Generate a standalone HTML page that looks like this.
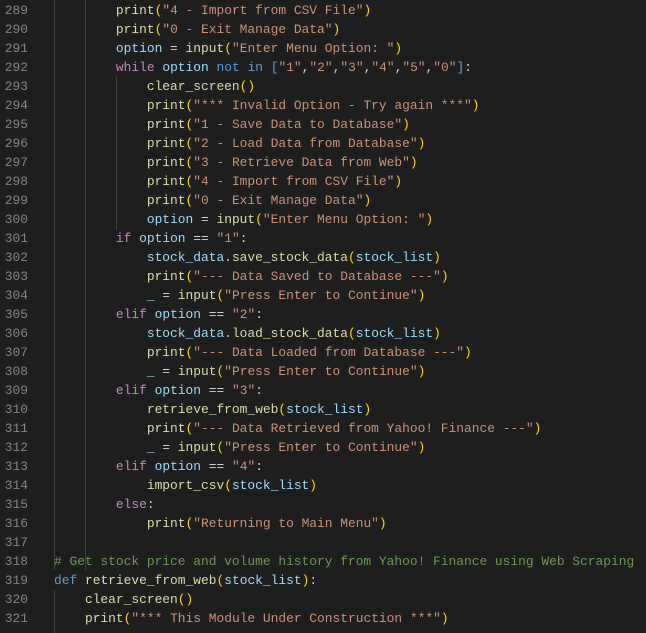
<!DOCTYPE html>
<html><head><meta charset="utf-8"><style>
html,body{margin:0;padding:0;background:#1e1e1e;width:646px;height:633px;overflow:hidden}
.w{position:relative;font-family:"Liberation Mono",monospace;font-size:12.9px;}
.r{position:absolute;left:0;height:19px;line-height:19px;white-space:pre;width:646px}
.n{position:absolute;left:0;width:28px;text-align:right;color:#858585}
.c{position:absolute;left:54px;color:#d4d4d4}
.g{position:absolute;width:1px;background:#404040}
.f{color:#dcdcaa}.s{color:#ce9178}.k{color:#c586c0}.b{color:#569cd6}.v{color:#9cdcfe}.m{color:#6a9955}.p{color:#ffd700}.q{color:#4fa3e0}
</style></head><body><div class="w">
<div class="g" style="left:54px;top:0;height:570px"></div>
<div class="g" style="left:85px;top:0;height:570px"></div>
<div class="g" style="left:116px;top:77px;height:153px"></div>
<div class="g" style="left:54px;top:590px;height:43px"></div>
<div class="r" style="top:1px"><span class="n">289</span><span class="c">        <span class="f">print</span><span class="p">(</span><span class="s">"4 - Import from CSV File"</span><span class="p">)</span></span></div>
<div class="r" style="top:20px"><span class="n">290</span><span class="c">        <span class="f">print</span><span class="p">(</span><span class="s">"0 - Exit Manage Data"</span><span class="p">)</span></span></div>
<div class="r" style="top:39px"><span class="n">291</span><span class="c">        <span class="v">option</span> = <span class="f">input</span><span class="p">(</span><span class="s">"Enter Menu Option: "</span><span class="p">)</span></span></div>
<div class="r" style="top:58px"><span class="n">292</span><span class="c">        <span class="k">while</span> <span class="v">option</span> <span class="b">not</span> <span class="b">in</span> <span class="q">[</span><span class="s">"1"</span>,<span class="s">"2"</span>,<span class="s">"3"</span>,<span class="s">"4"</span>,<span class="s">"5"</span>,<span class="s">"0"</span><span class="q">]</span>:</span></div>
<div class="r" style="top:77px"><span class="n">293</span><span class="c">            <span class="f">clear_screen</span><span class="p">()</span></span></div>
<div class="r" style="top:96px"><span class="n">294</span><span class="c">            <span class="f">print</span><span class="p">(</span><span class="s">"*** Invalid Option - Try again ***"</span><span class="p">)</span></span></div>
<div class="r" style="top:115px"><span class="n">295</span><span class="c">            <span class="f">print</span><span class="p">(</span><span class="s">"1 - Save Data to Database"</span><span class="p">)</span></span></div>
<div class="r" style="top:134px"><span class="n">296</span><span class="c">            <span class="f">print</span><span class="p">(</span><span class="s">"2 - Load Data from Database"</span><span class="p">)</span></span></div>
<div class="r" style="top:153px"><span class="n">297</span><span class="c">            <span class="f">print</span><span class="p">(</span><span class="s">"3 - Retrieve Data from Web"</span><span class="p">)</span></span></div>
<div class="r" style="top:172px"><span class="n">298</span><span class="c">            <span class="f">print</span><span class="p">(</span><span class="s">"4 - Import from CSV File"</span><span class="p">)</span></span></div>
<div class="r" style="top:191px"><span class="n">299</span><span class="c">            <span class="f">print</span><span class="p">(</span><span class="s">"0 - Exit Manage Data"</span><span class="p">)</span></span></div>
<div class="r" style="top:210px"><span class="n">300</span><span class="c">            <span class="v">option</span> = <span class="f">input</span><span class="p">(</span><span class="s">"Enter Menu Option: "</span><span class="p">)</span></span></div>
<div class="r" style="top:229px"><span class="n">301</span><span class="c">        <span class="k">if</span> <span class="v">option</span> == <span class="s">"1"</span>:</span></div>
<div class="r" style="top:248px"><span class="n">302</span><span class="c">            <span class="v">stock_data</span>.<span class="f">save_stock_data</span><span class="p">(</span><span class="v">stock_list</span><span class="p">)</span></span></div>
<div class="r" style="top:267px"><span class="n">303</span><span class="c">            <span class="f">print</span><span class="p">(</span><span class="s">"--- Data Saved to Database ---"</span><span class="p">)</span></span></div>
<div class="r" style="top:286px"><span class="n">304</span><span class="c">            <span class="v">_</span> = <span class="f">input</span><span class="p">(</span><span class="s">"Press Enter to Continue"</span><span class="p">)</span></span></div>
<div class="r" style="top:305px"><span class="n">305</span><span class="c">        <span class="k">elif</span> <span class="v">option</span> == <span class="s">"2"</span>:</span></div>
<div class="r" style="top:324px"><span class="n">306</span><span class="c">            <span class="v">stock_data</span>.<span class="f">load_stock_data</span><span class="p">(</span><span class="v">stock_list</span><span class="p">)</span></span></div>
<div class="r" style="top:343px"><span class="n">307</span><span class="c">            <span class="f">print</span><span class="p">(</span><span class="s">"--- Data Loaded from Database ---"</span><span class="p">)</span></span></div>
<div class="r" style="top:362px"><span class="n">308</span><span class="c">            <span class="v">_</span> = <span class="f">input</span><span class="p">(</span><span class="s">"Press Enter to Continue"</span><span class="p">)</span></span></div>
<div class="r" style="top:381px"><span class="n">309</span><span class="c">        <span class="k">elif</span> <span class="v">option</span> == <span class="s">"3"</span>:</span></div>
<div class="r" style="top:400px"><span class="n">310</span><span class="c">            <span class="f">retrieve_from_web</span><span class="p">(</span><span class="v">stock_list</span><span class="p">)</span></span></div>
<div class="r" style="top:419px"><span class="n">311</span><span class="c">            <span class="f">print</span><span class="p">(</span><span class="s">"--- Data Retrieved from Yahoo! Finance ---"</span><span class="p">)</span></span></div>
<div class="r" style="top:438px"><span class="n">312</span><span class="c">            <span class="v">_</span> = <span class="f">input</span><span class="p">(</span><span class="s">"Press Enter to Continue"</span><span class="p">)</span></span></div>
<div class="r" style="top:457px"><span class="n">313</span><span class="c">        <span class="k">elif</span> <span class="v">option</span> == <span class="s">"4"</span>:</span></div>
<div class="r" style="top:476px"><span class="n">314</span><span class="c">            <span class="f">import_csv</span><span class="p">(</span><span class="v">stock_list</span><span class="p">)</span></span></div>
<div class="r" style="top:495px"><span class="n">315</span><span class="c">        <span class="k">else</span>:</span></div>
<div class="r" style="top:514px"><span class="n">316</span><span class="c">            <span class="f">print</span><span class="p">(</span><span class="s">"Returning to Main Menu"</span><span class="p">)</span></span></div>
<div class="r" style="top:533px"><span class="n">317</span></div>
<div class="r" style="top:552px"><span class="n">318</span><span class="c"><span class="m"># Get stock price and volume history from Yahoo! Finance using Web Scraping</span></span></div>
<div class="r" style="top:571px"><span class="n">319</span><span class="c"><span class="b">def</span> <span class="f">retrieve_from_web</span><span class="p">(</span><span class="v">stock_list</span><span class="p">)</span>:</span></div>
<div class="r" style="top:590px"><span class="n">320</span><span class="c">    <span class="f">clear_screen</span><span class="p">()</span></span></div>
<div class="r" style="top:609px"><span class="n">321</span><span class="c">    <span class="f">print</span><span class="p">(</span><span class="s">"*** This Module Under Construction ***"</span><span class="p">)</span></span></div>
</div></body></html>
